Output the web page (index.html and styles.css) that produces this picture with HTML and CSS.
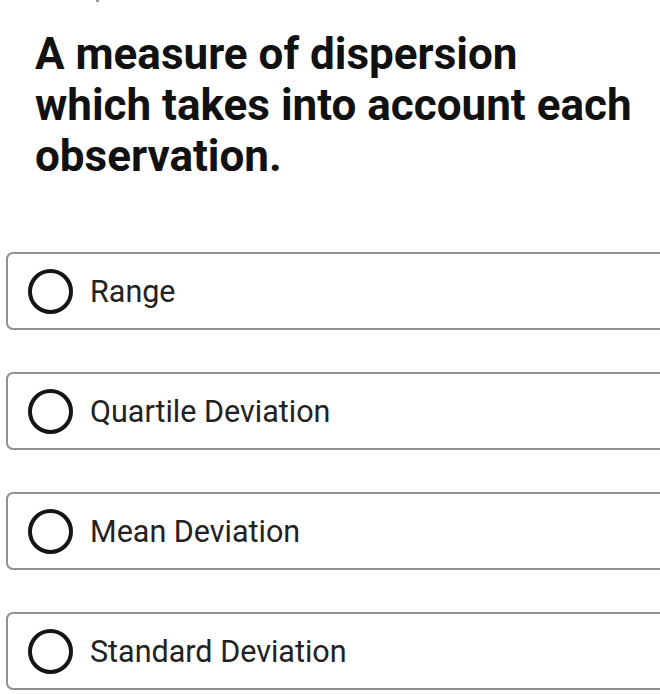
FILE: index.html
```html
<!DOCTYPE html>
<html>
<head>
<meta charset="utf-8">
<link rel="stylesheet" href="styles.css">
</head>
<body>
<div class="page">
  <div class="topmark"></div>
  <h1 class="question">A measure of dispersion which takes into account each observation.</h1>
  <div class="options">
    <div class="option"><span class="radio"></span><span class="label">Range</span></div>
    <div class="option"><span class="radio"></span><span class="label">Quartile Deviation</span></div>
    <div class="option"><span class="radio"></span><span class="label">Mean Deviation</span></div>
    <div class="option"><span class="radio"></span><span class="label">Standard Deviation</span></div>
  </div>
</div>
</body>
</html>
```
FILE: styles.css
```css
html, body {
  margin: 0;
  padding: 0;
  background: #ffffff;
  overflow: hidden;
}
.page {
  width: 660px;
  height: 694px;
  overflow: hidden;
  font-family: Roboto, "Liberation Sans", sans-serif;
}
.topmark {
  width: 3px;
  height: 2px;
  margin-left: 96px;
  background: #9a9a9a;
}
.question {
  margin: 0;
  padding: 27px 20px 0 35px;
  font-size: 44px;
  line-height: 51px;
  font-weight: 700;
  color: #111111;
}
.options {
  display: flex;
  flex-direction: column;
  gap: 42px;
  margin-top: 70px;
  padding-left: 6px;
}
.option {
  display: flex;
  align-items: center;
  height: 74px;
  width: 700px;
  border: 2px solid #909090;
  border-radius: 7px;
  box-sizing: content-box;
}
.radio {
  width: 37px;
  height: 37px;
  border: 4px solid #151515;
  border-radius: 50%;
  margin-left: 20px;
  flex: none;
}
.label {
  margin-left: 17px;
  font-size: 30.5px;
  line-height: 36px;
  padding-top: 2px;
  color: #222222;
}
```
